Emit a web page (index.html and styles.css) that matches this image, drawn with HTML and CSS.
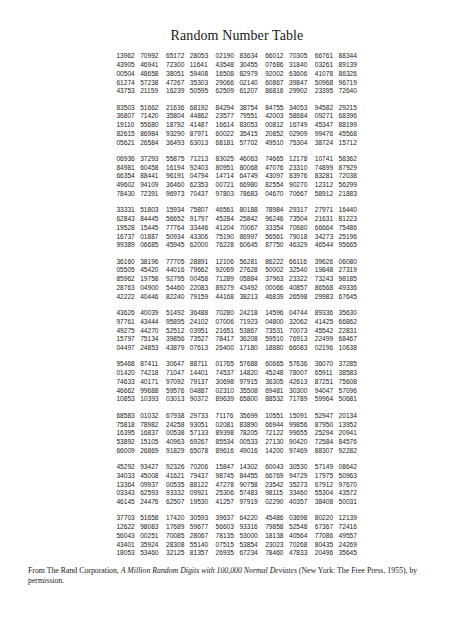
FILE: index.html
```html
<!DOCTYPE html>
<html lang="en">
<head>
<meta charset="utf-8">
<title>Random Number Table</title>
<link rel="stylesheet" href="styles.css">
</head>
<body>
<div class="page">
<h1 class="title">Random Number Table</h1>
<div class="table">
<div class="block">
<span>13962</span><span>70992</span><span>65172</span><span>28053</span><span>02190</span><span>83634</span><span>66012</span><span>70305</span><span>66761</span><span>88344</span>
<span>43905</span><span>46941</span><span>72300</span><span>11641</span><span>43548</span><span>30455</span><span>07686</span><span>31840</span><span>03261</span><span>89139</span>
<span>00504</span><span>48658</span><span>38051</span><span>59408</span><span>16508</span><span>82979</span><span>92002</span><span>63606</span><span>41078</span><span>86326</span>
<span>61274</span><span>57238</span><span>47267</span><span>35303</span><span>29066</span><span>02140</span><span>60867</span><span>39847</span><span>50968</span><span>96719</span>
<span>43753</span><span>21159</span><span>16239</span><span>50595</span><span>62509</span><span>61207</span><span>86816</span><span>29902</span><span>23395</span><span>72640</span>
</div>
<div class="block">
<span>83503</span><span>51662</span><span>21636</span><span>68192</span><span>84294</span><span>38754</span><span>84755</span><span>34053</span><span>94582</span><span>29215</span>
<span>36807</span><span>71420</span><span>35804</span><span>44862</span><span>23577</span><span>79551</span><span>42003</span><span>58684</span><span>09271</span><span>68396</span>
<span>19110</span><span>55680</span><span>18792</span><span>41487</span><span>16614</span><span>83053</span><span>00812</span><span>16749</span><span>45347</span><span>88199</span>
<span>82615</span><span>86984</span><span>93290</span><span>87971</span><span>60022</span><span>35415</span><span>20852</span><span>02909</span><span>99476</span><span>45568</span>
<span>05621</span><span>26584</span><span>36493</span><span>63013</span><span>68181</span><span>57702</span><span>49510</span><span>75304</span><span>38724</span><span>15712</span>
</div>
<div class="block">
<span>06936</span><span>37293</span><span>55875</span><span>71213</span><span>83025</span><span>46063</span><span>74665</span><span>12178</span><span>10741</span><span>58362</span>
<span>84981</span><span>60458</span><span>16194</span><span>92403</span><span>80951</span><span>80068</span><span>47076</span><span>23310</span><span>74899</span><span>87929</span>
<span>66354</span><span>88441</span><span>96191</span><span>04794</span><span>14714</span><span>64749</span><span>43097</span><span>83976</span><span>83281</span><span>72038</span>
<span>49602</span><span>94109</span><span>36460</span><span>62353</span><span>00721</span><span>66980</span><span>82554</span><span>90270</span><span>12312</span><span>56299</span>
<span>78430</span><span>72391</span><span>96973</span><span>70437</span><span>97803</span><span>78683</span><span>04670</span><span>70667</span><span>58912</span><span>21883</span>
</div>
<div class="block">
<span>33331</span><span>51803</span><span>15934</span><span>75807</span><span>46561</span><span>80188</span><span>78984</span><span>29317</span><span>27971</span><span>16440</span>
<span>62843</span><span>84445</span><span>56652</span><span>91797</span><span>45284</span><span>25842</span><span>96246</span><span>73504</span><span>21631</span><span>81223</span>
<span>19528</span><span>15445</span><span>77764</span><span>33446</span><span>41204</span><span>70067</span><span>33354</span><span>70680</span><span>66664</span><span>75486</span>
<span>16737</span><span>01887</span><span>50934</span><span>43306</span><span>75190</span><span>86997</span><span>56561</span><span>79018</span><span>34273</span><span>25196</span>
<span>99389</span><span>06685</span><span>45945</span><span>62000</span><span>76228</span><span>60645</span><span>87750</span><span>46329</span><span>46544</span><span>95665</span>
</div>
<div class="block">
<span>36160</span><span>38196</span><span>77705</span><span>28891</span><span>12106</span><span>56281</span><span>86222</span><span>66116</span><span>39626</span><span>06080</span>
<span>05505</span><span>45420</span><span>44016</span><span>79662</span><span>92069</span><span>27628</span><span>50002</span><span>32540</span><span>19848</span><span>27319</span>
<span>85962</span><span>19758</span><span>92795</span><span>00458</span><span>71289</span><span>05884</span><span>37963</span><span>23322</span><span>73243</span><span>98185</span>
<span>28763</span><span>04900</span><span>54460</span><span>22083</span><span>89279</span><span>43492</span><span>00066</span><span>40857</span><span>86568</span><span>49336</span>
<span>42222</span><span>40446</span><span>82240</span><span>79159</span><span>44168</span><span>38213</span><span>46839</span><span>26598</span><span>29983</span><span>67645</span>
</div>
<div class="block">
<span>43626</span><span>40039</span><span>51492</span><span>36488</span><span>70280</span><span>24218</span><span>14596</span><span>04744</span><span>89336</span><span>35630</span>
<span>97761</span><span>43444</span><span>95895</span><span>24102</span><span>07006</span><span>71923</span><span>04800</span><span>32062</span><span>41425</span><span>66862</span>
<span>49275</span><span>44270</span><span>52512</span><span>03951</span><span>21651</span><span>53867</span><span>73531</span><span>70073</span><span>45542</span><span>22831</span>
<span>15797</span><span>75134</span><span>39856</span><span>73527</span><span>78417</span><span>36208</span><span>59510</span><span>76913</span><span>22499</span><span>68467</span>
<span>04497</span><span>24853</span><span>43879</span><span>07613</span><span>26400</span><span>17180</span><span>18880</span><span>66083</span><span>02196</span><span>10638</span>
</div>
<div class="block">
<span>95468</span><span>87411</span><span>30647</span><span>88711</span><span>01765</span><span>57688</span><span>60665</span><span>57636</span><span>36070</span><span>37285</span>
<span>01420</span><span>74218</span><span>71047</span><span>14401</span><span>74537</span><span>14820</span><span>45248</span><span>78007</span><span>65911</span><span>38583</span>
<span>74633</span><span>40171</span><span>97092</span><span>79137</span><span>30698</span><span>97915</span><span>36305</span><span>42613</span><span>87251</span><span>75608</span>
<span>46662</span><span>99688</span><span>59576</span><span>04887</span><span>02310</span><span>35508</span><span>69481</span><span>30300</span><span>94047</span><span>57096</span>
<span>10853</span><span>10393</span><span>03013</span><span>90372</span><span>89639</span><span>65800</span><span>88532</span><span>71789</span><span>59964</span><span>50681</span>
</div>
<div class="block">
<span>68583</span><span>01032</span><span>67938</span><span>29733</span><span>71176</span><span>35699</span><span>10551</span><span>15091</span><span>52947</span><span>20134</span>
<span>75818</span><span>78982</span><span>24258</span><span>93051</span><span>02081</span><span>83890</span><span>66944</span><span>99856</span><span>87950</span><span>13952</span>
<span>16395</span><span>16837</span><span>00538</span><span>57133</span><span>89398</span><span>78205</span><span>72122</span><span>99655</span><span>25294</span><span>20941</span>
<span>53892</span><span>15105</span><span>40963</span><span>69267</span><span>85534</span><span>00533</span><span>27130</span><span>90420</span><span>72584</span><span>84576</span>
<span>66009</span><span>26869</span><span>91829</span><span>65078</span><span>89616</span><span>49016</span><span>14200</span><span>97469</span><span>88307</span><span>92282</span>
</div>
<div class="block">
<span>45292</span><span>93427</span><span>92326</span><span>70206</span><span>15847</span><span>14302</span><span>60043</span><span>30530</span><span>57149</span><span>08642</span>
<span>34033</span><span>45008</span><span>41621</span><span>79437</span><span>98745</span><span>84455</span><span>66769</span><span>94729</span><span>17975</span><span>50963</span>
<span>13364</span><span>09937</span><span>00535</span><span>88122</span><span>47278</span><span>90758</span><span>23542</span><span>35273</span><span>67912</span><span>97670</span>
<span>03343</span><span>62593</span><span>93332</span><span>09921</span><span>25306</span><span>57483</span><span>98115</span><span>33460</span><span>55304</span><span>43572</span>
<span>46145</span><span>24476</span><span>62507</span><span>19530</span><span>41257</span><span>97919</span><span>02290</span><span>40357</span><span>38408</span><span>50031</span>
</div>
<div class="block">
<span>37703</span><span>51658</span><span>17420</span><span>30593</span><span>39637</span><span>64220</span><span>45486</span><span>03698</span><span>80220</span><span>12139</span>
<span>12622</span><span>98083</span><span>17689</span><span>59677</span><span>56603</span><span>93316</span><span>79858</span><span>52548</span><span>67367</span><span>72416</span>
<span>56043</span><span>00251</span><span>70085</span><span>28067</span><span>78135</span><span>53000</span><span>18138</span><span>40564</span><span>77086</span><span>49557</span>
<span>43401</span><span>35924</span><span>28308</span><span>55140</span><span>07515</span><span>53854</span><span>23023</span><span>70268</span><span>80435</span><span>24269</span>
<span>18053</span><span>53460</span><span>32125</span><span>81357</span><span>26935</span><span>67234</span><span>78460</span><span>47833</span><span>20496</span><span>35645</span>
</div>
</div>
<p class="source">From The Rand Corporation, <i>A Million Random Digits with 100,000 Normal Deviates</i> (New York: The Free Press, 1955), by permission.</p>
</div>
</body>
</html>
```

FILE: styles.css
```css
html, body {
  margin: 0;
  padding: 0;
  background: #ffffff;
}

.page {
  width: 474px;
  min-height: 632px;
  box-sizing: border-box;
  padding: 27.6px 28px 0 28px;
  color: #111111;
}

.title {
  margin: 0;
  font-family: "Liberation Serif", "Times New Roman", serif;
  font-weight: normal;
  font-size: 14px;
  line-height: 16px;
  letter-spacing: 0.1px;
  text-align: center;
  color: #1a1a1a;
}

.table {
  margin-top: 8.8px;
  display: flex;
  flex-direction: column;
  align-items: center;
  gap: 7.83px;
}

.block {
  display: grid;
  grid-template-columns: repeat(4, 23.8px 25.8px) 23.8px 19px;
  font-family: "Liberation Sans", Arial, sans-serif;
  font-size: 6.6px;
  line-height: 8.7px;
  color: #222222;
  white-space: nowrap;
}

.source {
  margin: 7.8px 0 0 0;
  font-family: "Liberation Serif", "Times New Roman", serif;
  font-size: 7.8px;
  line-height: 10px;
  color: #1a1a1a;
}
```
